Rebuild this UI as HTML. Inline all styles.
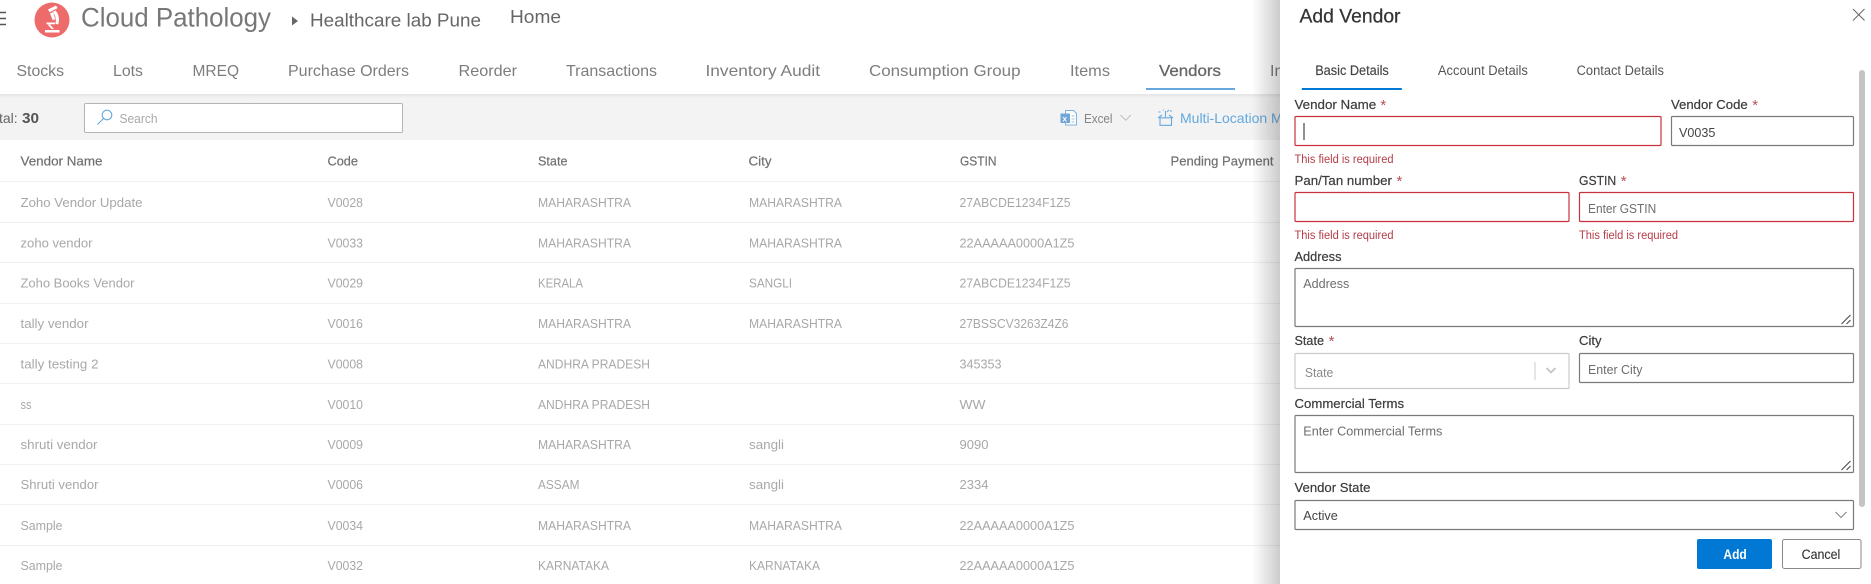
<!DOCTYPE html>
<html><head><meta charset="utf-8"><title>Add Vendor</title>
<style>
html,body{margin:0;padding:0;background:#fff;width:1871px;height:584px;overflow:hidden}
svg{display:block;font-family:"Liberation Sans",sans-serif}
text{white-space:pre}
.t{font-size:16px;fill:#7d7d7d}
.h{font-size:13px;fill:#707070;stroke:#707070;stroke-width:.2}
.c{font-size:13px;fill:#a8a8a8}
.l{font-size:13px;fill:#3c3c3c;stroke:#3c3c3c;stroke-width:.2}
.s{font-size:15px;fill:#b9505a}
.e{font-size:11.5px;fill:#b43c48}
.p{font-size:13px;fill:#6d6d6d}
.d{font-size:13px;fill:#444}
.in{fill:#fff;stroke:#7a7a7a;stroke-width:1.2}
.er{fill:#fff;stroke:#c8323c;stroke-width:1.2}
.ln{stroke:#f1f1f1;stroke-width:1.2}
</style></head><body>
<svg width="1871" height="584" viewBox="0 0 1871 584" xmlns="http://www.w3.org/2000/svg">
<defs>
<linearGradient id="sh" x1="0" x2="1" y1="0" y2="0"><stop offset="0" stop-color="#000" stop-opacity="0"/><stop offset="1" stop-color="#000" stop-opacity=".2"/></linearGradient>
<linearGradient id="tb" x1="0" x2="0" y1="0" y2="1"><stop offset="0" stop-color="#e4e4e4"/><stop offset="1" stop-color="#f3f3f3"/></linearGradient>
</defs>
<rect width="1871" height="584" fill="#fff"/>

<!-- hamburger -->
<path d="M0 12.500H6M0 18.500H6M0 24.500H6" stroke="#555" stroke-width="1.600" fill="none"/>
<!-- logo -->
<circle cx="52" cy="20" r="17.500" fill="#ee6b6b"/>
<g fill="#fff">
<path d="M48 9.500l8-4 1.600 2.600-8 4.200z"/>
<path d="M52.500 12l3-1.500c3.200 3.300 4.500 8.800 2.700 14l-2.800-.8c1.200-4 .2-8.500-2.900-11.700z"/>
<path d="M50 13.500l3-1.200 2.400 7-2.700 1z"/>
<path d="M46.500 22.500h8.500v1.800h-8.500z"/>
<path d="M49.500 24l4.500 5h-2.400l-3.600-4z"/>
<path d="M45 30h14.500v2.500H45z"/>
</g>
<text x="81" y="26.500" font-size="27" fill="#777" textLength="190" lengthAdjust="spacingAndGlyphs">Cloud Pathology</text>
<path d="M292 16.500l6 4.500-6 4.500z" fill="#666"/>
<text x="310" y="26.500" font-size="18" fill="#666" textLength="171" lengthAdjust="spacingAndGlyphs">Healthcare lab Pune</text>
<text x="510" y="23" font-size="18" fill="#666" textLength="51" lengthAdjust="spacingAndGlyphs">Home</text>

<!-- nav tabs -->
<text class="t" x="16.500" y="76" textLength="47.500" lengthAdjust="spacingAndGlyphs">Stocks</text>
<text class="t" x="113" y="76" textLength="30" lengthAdjust="spacingAndGlyphs">Lots</text>
<text class="t" x="192.500" y="76" textLength="46.500" lengthAdjust="spacingAndGlyphs">MREQ</text>
<text class="t" x="288" y="76" textLength="121" lengthAdjust="spacingAndGlyphs">Purchase Orders</text>
<text class="t" x="458.500" y="76" textLength="58.500" lengthAdjust="spacingAndGlyphs">Reorder</text>
<text class="t" x="566" y="76" textLength="91" lengthAdjust="spacingAndGlyphs">Transactions</text>
<text class="t" x="705.500" y="76" textLength="114.500" lengthAdjust="spacingAndGlyphs">Inventory Audit</text>
<text class="t" x="869" y="76" textLength="151.500" lengthAdjust="spacingAndGlyphs">Consumption Group</text>
<text class="t" x="1070" y="76" textLength="40" lengthAdjust="spacingAndGlyphs">Items</text>
<text class="t" x="1159" y="76" textLength="62" lengthAdjust="spacingAndGlyphs" style="fill:#666;stroke:#666;stroke-width:.3">Vendors</text>
<text class="t" x="1270" y="76">In</text>
<rect x="1146" y="88" width="89" height="2" fill="#66a8de"/>

<!-- toolbar -->
<rect x="0" y="94" width="1280" height="46" fill="#f3f3f3"/>
<rect x="0" y="94" width="1280" height="4" fill="url(#tb)"/>
<text x="-1" y="123" font-size="14" fill="#666">tal:</text>
<text x="22" y="123" font-size="14.500" font-weight="bold" fill="#555" textLength="17" lengthAdjust="spacingAndGlyphs">30</text>
<rect x="84.500" y="103.500" width="318" height="29" rx="1.500" fill="#fff" stroke="#b4b4b4" stroke-width="1"/>
<g fill="none" stroke="#62a8de" stroke-width="1.100"><circle cx="107" cy="115" r="4.800"/><path d="M103.500 118.500L97.500 124.500"/></g>
<text x="119.500" y="123" font-size="13" fill="#a9a9a9" textLength="38" lengthAdjust="spacingAndGlyphs">Search</text>

<g>
<path d="M1065.500 110.500h8l3 3v11.500h-11z" fill="#fff" stroke="#7fb2dc"/>
<rect x="1060.500" y="113.500" width="9.500" height="9.500" fill="#6fa6d6"/>
<text x="1062.500" y="121.500" font-size="8" font-weight="bold" fill="#fff">x</text>
<path d="M1071.500 116h3M1071.500 119h3M1071.500 122h3" stroke="#9cc4e4"/>
</g>
<text x="1084" y="123" font-size="13" fill="#858585" textLength="28.500" lengthAdjust="spacingAndGlyphs">Excel</text>
<path d="M1120.500 115l5.200 5.200 5.200-5.200" fill="none" stroke="#bdbdbd"/>
<g fill="none" stroke="#66a8de" stroke-width="1.100">
<path d="M1160 117.500h11.500v7.500h-11.500z" transform="translate(0 .3)"/>
<path d="M1158 118l4-3M1173 118l-4-3M1165.500 117v-6"/>
<path d="M1158.500 112h2M1170 111h2M1163 110h1M1167 112l2-2"/>
</g>
<text x="1180" y="123" font-size="14" fill="#62a8de">Multi-Location M</text>

<!-- table header -->
<text class="h" x="20.500" y="165.500" textLength="82" lengthAdjust="spacingAndGlyphs">Vendor Name</text>
<text class="h" x="327.500" y="165.500" textLength="30.500" lengthAdjust="spacingAndGlyphs">Code</text>
<text class="h" x="538" y="165.500" textLength="29.500" lengthAdjust="spacingAndGlyphs">State</text>
<text class="h" x="748.500" y="165.500" textLength="23" lengthAdjust="spacingAndGlyphs">City</text>
<text class="h" x="960" y="165.500" textLength="36.500" lengthAdjust="spacingAndGlyphs">GSTIN</text>
<text class="h" x="1170.500" y="165.500" textLength="103" lengthAdjust="spacingAndGlyphs">Pending Payment</text>
<path class="ln" d="M0 181.500H1280M0 222.500H1280M0 262.500H1280M0 303.500H1280M0 343.500H1280M0 383.500H1280M0 424.500H1280M0 464.500H1280M0 504.500H1280M0 545.500H1280"/>

<!-- rows -->
<g class="c">
<text class="c" x="20.500" y="207" textLength="122" lengthAdjust="spacingAndGlyphs">Zoho Vendor Update</text>
<text class="c" x="327.500" y="207" textLength="35.500" lengthAdjust="spacingAndGlyphs">V0028</text>
<text class="c" x="538" y="207" textLength="93" lengthAdjust="spacingAndGlyphs">MAHARASHTRA</text>
<text class="c" x="749" y="207" textLength="93" lengthAdjust="spacingAndGlyphs">MAHARASHTRA</text>
<text class="c" x="959.500" y="207" textLength="111" lengthAdjust="spacingAndGlyphs">27ABCDE1234F1Z5</text>

<text class="c" x="20.500" y="247.500" textLength="72" lengthAdjust="spacingAndGlyphs">zoho vendor</text>
<text class="c" x="327.500" y="247.500" textLength="35.500" lengthAdjust="spacingAndGlyphs">V0033</text>
<text class="c" x="538" y="247.500" textLength="93" lengthAdjust="spacingAndGlyphs">MAHARASHTRA</text>
<text class="c" x="749" y="247.500" textLength="93" lengthAdjust="spacingAndGlyphs">MAHARASHTRA</text>
<text class="c" x="959.500" y="247.500" textLength="115" lengthAdjust="spacingAndGlyphs">22AAAAA0000A1Z5</text>

<text class="c" x="20.500" y="287.500" textLength="114" lengthAdjust="spacingAndGlyphs">Zoho Books Vendor</text>
<text class="c" x="327.500" y="287.500" textLength="35.500" lengthAdjust="spacingAndGlyphs">V0029</text>
<text class="c" x="538" y="287.500" textLength="45" lengthAdjust="spacingAndGlyphs">KERALA</text>
<text class="c" x="749" y="287.500" textLength="43" lengthAdjust="spacingAndGlyphs">SANGLI</text>
<text class="c" x="959.500" y="287.500" textLength="111" lengthAdjust="spacingAndGlyphs">27ABCDE1234F1Z5</text>

<text class="c" x="20.500" y="328" textLength="68" lengthAdjust="spacingAndGlyphs">tally vendor</text>
<text class="c" x="327.500" y="328" textLength="35.500" lengthAdjust="spacingAndGlyphs">V0016</text>
<text class="c" x="538" y="328" textLength="93" lengthAdjust="spacingAndGlyphs">MAHARASHTRA</text>
<text class="c" x="749" y="328" textLength="93" lengthAdjust="spacingAndGlyphs">MAHARASHTRA</text>
<text class="c" x="959.500" y="328" textLength="109" lengthAdjust="spacingAndGlyphs">27BSSCV3263Z4Z6</text>

<text class="c" x="20.500" y="368.500" textLength="78" lengthAdjust="spacingAndGlyphs">tally testing 2</text>
<text class="c" x="327.500" y="368.500" textLength="35.500" lengthAdjust="spacingAndGlyphs">V0008</text>
<text class="c" x="538" y="368.500" textLength="112" lengthAdjust="spacingAndGlyphs">ANDHRA PRADESH</text>
<text class="c" x="959.500" y="368.500" textLength="42" lengthAdjust="spacingAndGlyphs">345353</text>

<text class="c" x="20.500" y="409" textLength="11" lengthAdjust="spacingAndGlyphs">ss</text>
<text class="c" x="327.500" y="409" textLength="35.500" lengthAdjust="spacingAndGlyphs">V0010</text>
<text class="c" x="538" y="409" textLength="112" lengthAdjust="spacingAndGlyphs">ANDHRA PRADESH</text>
<text class="c" x="959.500" y="409" textLength="26" lengthAdjust="spacingAndGlyphs">WW</text>

<text class="c" x="20.500" y="449" textLength="77" lengthAdjust="spacingAndGlyphs">shruti vendor</text>
<text class="c" x="327.500" y="449" textLength="35.500" lengthAdjust="spacingAndGlyphs">V0009</text>
<text class="c" x="538" y="449" textLength="93" lengthAdjust="spacingAndGlyphs">MAHARASHTRA</text>
<text class="c" x="749" y="449" textLength="35" lengthAdjust="spacingAndGlyphs">sangli</text>
<text class="c" x="959.500" y="449" textLength="29" lengthAdjust="spacingAndGlyphs">9090</text>

<text class="c" x="20.500" y="489" textLength="78" lengthAdjust="spacingAndGlyphs">Shruti vendor</text>
<text class="c" x="327.500" y="489" textLength="35.500" lengthAdjust="spacingAndGlyphs">V0006</text>
<text class="c" x="538" y="489" textLength="41.500" lengthAdjust="spacingAndGlyphs">ASSAM</text>
<text class="c" x="749" y="489" textLength="35" lengthAdjust="spacingAndGlyphs">sangli</text>
<text class="c" x="959.500" y="489" textLength="29" lengthAdjust="spacingAndGlyphs">2334</text>

<text class="c" x="20.500" y="530" textLength="42" lengthAdjust="spacingAndGlyphs">Sample</text>
<text class="c" x="327.500" y="530" textLength="35.500" lengthAdjust="spacingAndGlyphs">V0034</text>
<text class="c" x="538" y="530" textLength="93" lengthAdjust="spacingAndGlyphs">MAHARASHTRA</text>
<text class="c" x="749" y="530" textLength="93" lengthAdjust="spacingAndGlyphs">MAHARASHTRA</text>
<text class="c" x="959.500" y="530" textLength="115" lengthAdjust="spacingAndGlyphs">22AAAAA0000A1Z5</text>

<text class="c" x="20.500" y="570" textLength="42" lengthAdjust="spacingAndGlyphs">Sample</text>
<text class="c" x="327.500" y="570" textLength="35.500" lengthAdjust="spacingAndGlyphs">V0032</text>
<text class="c" x="538" y="570" textLength="71" lengthAdjust="spacingAndGlyphs">KARNATAKA</text>
<text class="c" x="749" y="570" textLength="71" lengthAdjust="spacingAndGlyphs">KARNATAKA</text>
<text class="c" x="959.500" y="570" textLength="115" lengthAdjust="spacingAndGlyphs">22AAAAA0000A1Z5</text>
</g>

<!-- panel shadow + panel -->
<rect x="1252" y="0" width="28" height="584" fill="url(#sh)"/>
<rect x="1280" y="0" width="591" height="584" fill="#fff"/>

<text x="1299.500" y="22.500" font-size="19.500" fill="#333" stroke="#333" stroke-width=".25" textLength="101" lengthAdjust="spacingAndGlyphs">Add Vendor</text>
<path d="M1853 9l11.500 11.500M1864.500 9L1853 20.500" stroke="#666" stroke-width="1" fill="none"/>

<text x="1315.200" y="75" font-size="13.500" fill="#444" stroke="#444" stroke-width=".15" textLength="73.600" lengthAdjust="spacingAndGlyphs">Basic Details</text>
<text x="1437.900" y="75" font-size="13.500" fill="#555" textLength="90" lengthAdjust="spacingAndGlyphs">Account Details</text>
<text x="1576.600" y="75" font-size="13.500" fill="#555" textLength="87.400" lengthAdjust="spacingAndGlyphs">Contact Details</text>
<rect x="1301.800" y="88" width="100" height="2" fill="#0078d4"/>

<rect x="1859" y="70" width="6" height="437" rx="3" fill="#c4c4c4"/>

<!-- Row 1 -->
<text class="l" x="1294.500" y="109" textLength="81.700" lengthAdjust="spacingAndGlyphs">Vendor Name</text><text class="s" x="1380.400" y="110">*</text>
<text class="l" x="1671" y="109" textLength="76.700" lengthAdjust="spacingAndGlyphs">Vendor Code</text><text class="s" x="1752.200" y="110">*</text>
<rect class="er" x="1295" y="116.500" width="366" height="29" rx="1"/>
<rect x="1303.500" y="123" width="1" height="17" fill="#222"/>
<rect class="in" x="1671.500" y="116.500" width="182" height="29" rx="1"/>
<text class="d" x="1679" y="137" textLength="36.400" lengthAdjust="spacingAndGlyphs">V0035</text>
<text class="e" x="1294.500" y="163" textLength="99" lengthAdjust="spacingAndGlyphs">This field is required</text>

<!-- Row 2 -->
<text class="l" x="1294.500" y="185" textLength="97.400" lengthAdjust="spacingAndGlyphs">Pan/Tan number</text><text class="s" x="1396.500" y="186">*</text>
<text class="l" x="1579" y="185" textLength="37.200" lengthAdjust="spacingAndGlyphs">GSTIN</text><text class="s" x="1620.700" y="186">*</text>
<rect class="er" x="1295" y="192.500" width="274" height="29" rx="1"/>
<rect class="er" x="1579.500" y="192.500" width="274" height="29" rx="1"/>
<text class="p" x="1588" y="213" textLength="68.200" lengthAdjust="spacingAndGlyphs">Enter GSTIN</text>
<text class="e" x="1294.500" y="239" textLength="99" lengthAdjust="spacingAndGlyphs">This field is required</text>
<text class="e" x="1579" y="239" textLength="99" lengthAdjust="spacingAndGlyphs">This field is required</text>

<!-- Address -->
<text class="l" x="1294.500" y="261" textLength="47" lengthAdjust="spacingAndGlyphs">Address</text>
<rect class="in" x="1295" y="268.500" width="558.500" height="58" rx="1"/>
<text class="p" x="1303.300" y="288" textLength="46" lengthAdjust="spacingAndGlyphs">Address</text>
<path d="M1841.500 324l9-9M1846.500 324l4-4" stroke="#444" fill="none"/>

<!-- State/City -->
<text class="l" x="1294.500" y="345" textLength="29.500" lengthAdjust="spacingAndGlyphs">State</text><text class="s" x="1328.600" y="346">*</text>
<text class="l" x="1579" y="345" textLength="22.600" lengthAdjust="spacingAndGlyphs">City</text>
<rect x="1295" y="353.500" width="274" height="35" rx="1" fill="#fff" stroke="#cbcbcb" stroke-width="1.200"/>
<text x="1304.900" y="377" font-size="13" fill="#8a8a8a" textLength="28.400" lengthAdjust="spacingAndGlyphs">State</text>
<rect x="1534.500" y="362" width="1" height="18" fill="#cbcbcb"/>
<path d="M1546.500 368l4.500 4.500 4.500-4.500" fill="none" stroke="#c4c4c4" stroke-width="1.800"/>
<rect class="in" x="1579.500" y="353.500" width="274" height="29" rx="1"/>
<text class="p" x="1588" y="374" textLength="54.400" lengthAdjust="spacingAndGlyphs">Enter City</text>

<!-- Commercial Terms -->
<text class="l" x="1294.500" y="408" textLength="109.600" lengthAdjust="spacingAndGlyphs">Commercial Terms</text>
<rect class="in" x="1295" y="415.500" width="558.500" height="57" rx="1"/>
<text class="p" x="1303.300" y="435.500" textLength="139.100" lengthAdjust="spacingAndGlyphs">Enter Commercial Terms</text>
<path d="M1841.500 470l9-9M1846.500 470l4-4" stroke="#444" fill="none"/>

<!-- Vendor State -->
<text class="l" x="1294.500" y="492" textLength="75.900" lengthAdjust="spacingAndGlyphs">Vendor State</text>
<rect class="in" x="1295" y="500.500" width="558.500" height="29" rx="1"/>
<text class="d" x="1303.300" y="520" textLength="34.500" lengthAdjust="spacingAndGlyphs">Active</text>
<path d="M1835.500 512l5.500 5.500 5.500-5.500" fill="none" stroke="#777" stroke-width=".9"/>

<!-- Buttons -->
<rect x="1697" y="539" width="75" height="30" rx="2" fill="#0078d4"/>
<text x="1723.400" y="559" font-size="13.500" font-weight="bold" fill="#fff" textLength="23.400" lengthAdjust="spacingAndGlyphs">Add</text>
<rect x="1782.500" y="539.500" width="78.500" height="29" rx="2" fill="#fff" stroke="#8a8a8a"/>
<text x="1801.600" y="559" font-size="13.500" fill="#333" stroke="#333" stroke-width=".1" textLength="38.700" lengthAdjust="spacingAndGlyphs">Cancel</text>
</svg>
</body></html>
